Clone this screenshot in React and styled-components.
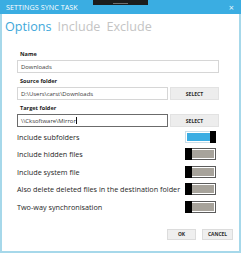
import React from "react";
import styled, { createGlobalStyle } from "styled-components";

const Global = createGlobalStyle`
  html, body {
    margin: 0;
    padding: 0;
    background: #ffffff;
  }
  * {
    box-sizing: border-box;
  }
`;

const Window = styled.div`
  width: 241px;
  height: 253px;
  display: flex;
  flex-direction: column;
  font-family: "Open Sans", "Liberation Sans", sans-serif;
  background: #ffffff;
`;

const TitleBar = styled.div`
  position: relative;
  height: 14px;
  flex: none;
  display: flex;
  align-items: center;
  justify-content: space-between;
  padding: 0 7px 0 6px;
  background: #3aade2;
  color: #ffffff;
  font-size: 7.2px;
  letter-spacing: 0.05px;
`;

const Notch = styled.div`
  position: absolute;
  left: 93px;
  top: 0;
  width: 55px;
  height: 5px;
  background: #1c1c1c;
  display: flex;
  justify-content: center;
  align-items: flex-end;
  padding-bottom: 1px;
  &::after {
    content: "";
    width: 15px;
    height: 1px;
    background: #6f6f6f;
  }
`;

const Close = styled.span`
  font-size: 9px;
  line-height: 1;
  color: #e8f6fc;
`;

const Body = styled.div`
  flex: 1;
  display: flex;
  flex-direction: column;
  border: 2px solid #a6d8ea;
  border-top: none;
`;

const Tabs = styled.div`
  display: flex;
  gap: 6px;
  margin-top: 4px;
  padding-left: 3px;
  height: 17px;
  align-items: center;
`;

const Tab = styled.span`
  font-size: 12.6px;
  font-weight: 400;
  color: ${(p) => (p.active ? "#3ea8da" : "#c4c4c4")};
`;

const Form = styled.div`
  display: flex;
  flex-direction: column;
  padding: 11px 20px 0 15px;
`;

const FieldLabel = styled.div`
  height: 14px;
  display: flex;
  align-items: center;
  padding: 1px 0 0 3px;
  font-size: 5.6px;
  font-weight: 700;
  color: #1a1a1a;
`;

const InputRow = styled.div`
  display: flex;
  gap: 2px;
  height: 13px;
`;

const TextBox = styled.div`
  flex: 1;
  display: flex;
  align-items: center;
  padding-left: 3px;
  border: 1px solid ${(p) => (p.focused ? "#6b6b6b" : "#d6d6d6")};
  background: #ffffff;
  font-size: 5.9px;
  color: #3a3a3a;
`;

const Caret = styled.span`
  width: 0.6px;
  height: 7px;
  background: #111;
  margin-left: 0.5px;
`;

const SelectButton = styled.div`
  width: 49px;
  flex: none;
  display: flex;
  align-items: center;
  justify-content: center;
  background: #ededed;
  border: 1px solid #e2e2e2;
  font-size: 5px;
  font-weight: 700;
  color: #2a2a2a;
`;

const Switches = styled.div`
  display: flex;
  flex-direction: column;
  margin-top: 1px;
`;

const SwitchRow = styled.div`
  height: 17.5px;
  display: flex;
  align-items: center;
  justify-content: space-between;
  padding-right: 3px;
  font-size: 7.25px;
  color: #1e1e1e;
`;

const Track = styled.div`
  width: 31px;
  height: 12px;
  display: flex;
  flex-direction: ${(p) => (p.on ? "row-reverse" : "row")};
  border: 1px solid ${(p) => (p.on ? "#c9dde8" : "#5c5c5c")};
  background: #ffffff;
`;

const Knob = styled.div`
  width: ${(p) => (p.on ? 6 : 7)}px;
  margin: -1px;
  background: #000000;
  flex: none;
`;

const Fill = styled.div`
  flex: 1;
  margin: 1px;
  background: ${(p) => (p.on ? "#3aade3" : "#a7a39b")};
`;

const Footer = styled.div`
  display: flex;
  justify-content: flex-end;
  gap: 6px;
  margin-top: 13px;
  padding-right: 6px;
`;

const DialogButton = styled.div`
  width: ${(p) => p.w}px;
  height: 11px;
  display: flex;
  align-items: center;
  justify-content: center;
  background: #efefef;
  border: 1px solid #dcdcdc;
  font-size: 4.9px;
  font-weight: 700;
  color: #2a2a2a;
`;

const Switch = ({ label, on }) => (
  <SwitchRow>
    <span>{label}</span>
    <Track on={on ? 1 : 0}>
      <Knob on={on ? 1 : 0} />
      <Fill on={on ? 1 : 0} />
    </Track>
  </SwitchRow>
);

const switches = [
  { label: "Include subfolders", on: true },
  { label: "Include hidden files", on: false },
  { label: "Include system file", on: false },
  { label: "Also delete deleted files in the destination folder", on: false },
  { label: "Two-way synchronisation", on: false },
];

export default function App() {
  return (
    <Window>
      <Global />
      <TitleBar>
        <span>SETTINGS SYNC TASK</span>
        <Notch />
        <Close>×</Close>
      </TitleBar>
      <Body>
        <Tabs>
          <Tab active>Options</Tab>
          <Tab>Include</Tab>
          <Tab>Exclude</Tab>
        </Tabs>
        <Form>
          <FieldLabel>Name</FieldLabel>
          <InputRow>
            <TextBox>Downloads</TextBox>
          </InputRow>
          <FieldLabel>Source folder</FieldLabel>
          <InputRow>
            <TextBox>D:\Users\carst\Downloads</TextBox>
            <SelectButton>SELECT</SelectButton>
          </InputRow>
          <FieldLabel>Target folder</FieldLabel>
          <InputRow>
            <TextBox focused>
              \\Cksoftware\Mirror
              <Caret />
            </TextBox>
            <SelectButton>SELECT</SelectButton>
          </InputRow>
          <Switches>
            {switches.map((s) => (
              <Switch key={s.label} label={s.label} on={s.on} />
            ))}
          </Switches>
        </Form>
        <Footer>
          <DialogButton w={29}>OK</DialogButton>
          <DialogButton w={31}>CANCEL</DialogButton>
        </Footer>
      </Body>
    </Window>
  );
}
